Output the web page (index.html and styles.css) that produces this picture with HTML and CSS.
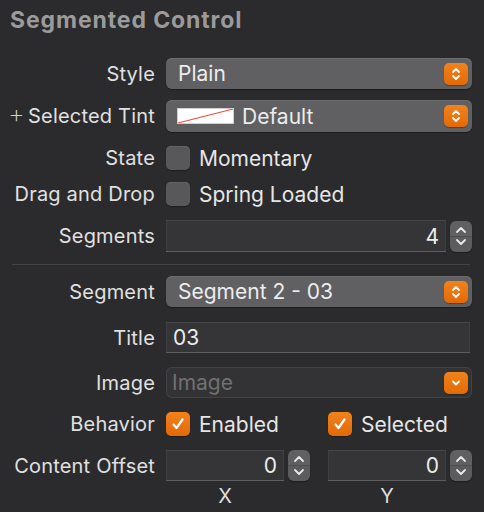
FILE: index.html
```html
<!DOCTYPE html>
<html>
<head>
	<meta charset="utf-8">
	<title>Segmented Control</title>
	<link rel="stylesheet" href="styles.css">
</head>
<body>
	<div class="panel">
		<h1 class="heading">Segmented Control</h1>

		<div class="row first">
			<span class="label">Style</span>
			<div class="popup">
				<span class="value">Plain</span>
				<span class="arrows">
					<svg width="10" height="14" viewBox="0 0 10 14"><path d="M2 5 L5 2 L8 5 M2 9 L5 12 L8 9" fill="none" stroke="#fff" stroke-width="1.8" stroke-linecap="round" stroke-linejoin="round"/></svg>
				</span>
			</div>
		</div>

		<div class="row m11">
			<span class="label"><span class="plus">+</span>Selected Tint</span>
			<div class="popup tall">
				<span class="swatch">
					<svg width="55" height="14" viewBox="0 0 55 14"><line x1="0" y1="14" x2="55" y2="0" stroke="#ff3b30" stroke-width="1"/></svg>
				</span>
				<span class="value">Default</span>
				<span class="arrows">
					<svg width="10" height="14" viewBox="0 0 10 14"><path d="M2 5 L5 2 L8 5 M2 9 L5 12 L8 9" fill="none" stroke="#fff" stroke-width="1.8" stroke-linecap="round" stroke-linejoin="round"/></svg>
				</span>
			</div>
		</div>

		<div class="row">
			<span class="label">State</span>
			<label class="check"><span class="box"></span>Momentary</label>
		</div>

		<div class="row m12">
			<span class="label">Drag and Drop</span>
			<label class="check"><span class="box"></span>Spring Loaded</label>
		</div>

		<div class="row">
			<span class="label">Segments</span>
			<div class="number">
				<div class="field num tall">4</div>
				<div class="stepper tall">
					<svg width="12" height="8" viewBox="0 0 12 8"><path d="M2 6 L6 2 L10 6" fill="none" stroke="#e8e8e8" stroke-width="1.8" stroke-linecap="round" stroke-linejoin="round"/></svg>
					<svg width="12" height="8" viewBox="0 0 12 8"><path d="M2 2 L6 6 L10 2" fill="none" stroke="#e8e8e8" stroke-width="1.8" stroke-linecap="round" stroke-linejoin="round"/></svg>
				</div>
			</div>
		</div>

		<div class="divider"></div>

		<div class="row m11">
			<span class="label">Segment</span>
			<div class="popup">
				<span class="value">Segment 2 - 03</span>
				<span class="arrows">
					<svg width="10" height="14" viewBox="0 0 10 14"><path d="M2 5 L5 2 L8 5 M2 9 L5 12 L8 9" fill="none" stroke="#fff" stroke-width="1.8" stroke-linecap="round" stroke-linejoin="round"/></svg>
				</span>
			</div>
		</div>

		<div class="row m15">
			<span class="label">Title</span>
			<div class="field text">03</div>
		</div>

		<div class="row">
			<span class="label">Image</span>
			<div class="popup disabled">
				<span class="value">Image</span>
				<span class="arrows">
					<svg width="10" height="14" viewBox="0 0 10 14"><path d="M2 5.5 L5 8.5 L8 5.5" fill="none" stroke="#fff" stroke-width="1.8" stroke-linecap="round" stroke-linejoin="round"/></svg>
				</span>
			</div>
		</div>

		<div class="row">
			<span class="label">Behavior</span>
			<div class="pair">
				<label class="check"><span class="box on"><svg width="16" height="16" viewBox="0 0 16 16"><path d="M3.5 8.5 L6.5 12 L12.5 3.5" fill="none" stroke="#fff" stroke-width="2.2" stroke-linecap="round" stroke-linejoin="round"/></svg></span>Enabled</label>
				<label class="check"><span class="box on"><svg width="16" height="16" viewBox="0 0 16 16"><path d="M3.5 8.5 L6.5 12 L12.5 3.5" fill="none" stroke="#fff" stroke-width="2.2" stroke-linecap="round" stroke-linejoin="round"/></svg></span>Selected</label>
			</div>
		</div>

		<div class="row">
			<span class="label">Content Offset</span>
			<div class="pair">
				<div class="number">
					<div class="field num">0</div>
					<div class="stepper">
						<svg width="12" height="8" viewBox="0 0 12 8"><path d="M2 6 L6 2 L10 6" fill="none" stroke="#e8e8e8" stroke-width="1.8" stroke-linecap="round" stroke-linejoin="round"/></svg>
						<svg width="12" height="8" viewBox="0 0 12 8"><path d="M2 2 L6 6 L10 2" fill="none" stroke="#e8e8e8" stroke-width="1.8" stroke-linecap="round" stroke-linejoin="round"/></svg>
					</div>
				</div>
				<div class="number">
					<div class="field num">0</div>
					<div class="stepper">
						<svg width="12" height="8" viewBox="0 0 12 8"><path d="M2 6 L6 2 L10 6" fill="none" stroke="#e8e8e8" stroke-width="1.8" stroke-linecap="round" stroke-linejoin="round"/></svg>
						<svg width="12" height="8" viewBox="0 0 12 8"><path d="M2 2 L6 6 L10 2" fill="none" stroke="#e8e8e8" stroke-width="1.8" stroke-linecap="round" stroke-linejoin="round"/></svg>
					</div>
				</div>
			</div>
		</div>

		<div class="row axis">
			<span class="label"></span>
			<div class="pair">
				<span class="axisName">X</span>
				<span class="axisName">Y</span>
			</div>
		</div>
	</div>
</body>
</html>
```

FILE: styles.css
```css
html, body {
	margin: 0;
	background: #2b2b2d;
	font-family: Inter, "Noto Sans", sans-serif;
	color: #dedede;
}

.panel {
	width: 484px;
	height: 512px;
	overflow: hidden;
	padding-right: 12px;
	box-sizing: border-box;
}

.heading {
	margin: 0;
	padding: 5px 0 0 10px;
	font-size: 23px;
	letter-spacing: 0.9px;
	line-height: 30px;
	font-weight: 700;
	color: #9b9b9c;
}

.row {
	display: grid;
	grid-template-columns: 155px 1fr;
	column-gap: 11px;
	align-items: center;
	margin-top: 14px;
	font-size: 20px;
}
.row.first { margin-top: 23px; }
.row.m11 { margin-top: 11px; }
.row.m12 { margin-top: 12px; }
.row.m15 { margin-top: 15px; }
.row.axis { margin-top: 5px; }

.label {
	text-align: right;
	white-space: nowrap;
	letter-spacing: 0.2px;
	line-height: 24px;
	color: #e0e0e0;
}
.plus {
	display: inline-block;
	margin-right: 3px;
	font-size: 26px;
	line-height: 20px;
	vertical-align: top;
	font-weight: 200;
	color: #d0d0d0;
}

/* popup buttons */
.popup {
	display: flex;
	align-items: center;
	height: 31px;
	padding-left: 12px;
	border-radius: 6px;
	background: #606062;
	box-shadow: inset 0 1px 0 #6c6c6e, 0 1px 1px rgba(0,0,0,0.35);
	font-size: 21px;
	color: #ececec;
}
.popup.tall { height: 32px; }
.popup .value { flex: 1; }
.popup.disabled {
	background: #333335;
	box-shadow: inset 0 0 0 1px #424244;
	padding-left: 6px;
}
.popup.disabled .value { color: #707072; }

.arrows {
	display: flex;
	align-items: center;
	justify-content: center;
	width: 24px;
	height: 22px;
	margin-right: 4px;
	border-radius: 5px;
	background: linear-gradient(#f1821c, #e36a06);
	box-shadow: 0 1px 1px rgba(0,0,0,0.3);
}

.swatch {
	display: flex;
	width: 55px;
	height: 14px;
	margin-right: 9px;
	background: #fff;
	box-shadow: 0 0 0 1px #d0d0d0;
}

/* checkboxes */
.check {
	display: flex;
	align-items: center;
	height: 24px;
	font-size: 21px;
	color: #e6e6e6;
}
.box {
	display: flex;
	align-items: center;
	justify-content: center;
	width: 24px;
	height: 24px;
	margin-right: 9px;
	border-radius: 5px;
	background: #58585a;
	box-shadow: inset 0 1px 0 #646466, 0 1px 1px rgba(0,0,0,0.3);
}
.box.on {
	background: linear-gradient(#f1821c, #e36a06);
	box-shadow: 0 1px 1px rgba(0,0,0,0.3);
}

.pair {
	display: grid;
	grid-template-columns: 1fr 1fr;
	column-gap: 18px;
}

/* text and number fields */
.field {
	height: 31px;
	box-sizing: border-box;
	display: flex;
	align-items: center;
	background: #353537;
	border-top: 1px solid #464648;
	border-bottom: 1px solid #5e5e60;
	box-shadow: inset 1px 0 0 #3e3e40, inset -1px 0 0 #3e3e40;
	font-size: 21px;
	color: #ececec;
}
.field.tall { height: 32px; }
.field.text {
	width: 304px;
	padding-left: 7px;
}
.field.num {
	flex: 1;
	justify-content: flex-end;
	padding-right: 7px;
}

.number {
	display: flex;
	align-items: center;
	gap: 4px;
}

.stepper {
	display: flex;
	flex-direction: column;
	align-items: center;
	justify-content: space-around;
	width: 22px;
	height: 31px;
	box-sizing: border-box;
	padding: 3px 0;
	border-radius: 6px;
	background: linear-gradient(#606062 49%, #4e4e50 49%, #4e4e50 53%, #5c5c5e 53%);
	box-shadow: 0 1px 1px rgba(0,0,0,0.35);
}

.divider {
	height: 1px;
	margin: 12px 2px 0 12px;
	background: #434345;
}

.axisName {
	width: 118px;
	text-align: center;
	font-size: 20px;
	line-height: 20px;
	color: #dedede;
}
```
